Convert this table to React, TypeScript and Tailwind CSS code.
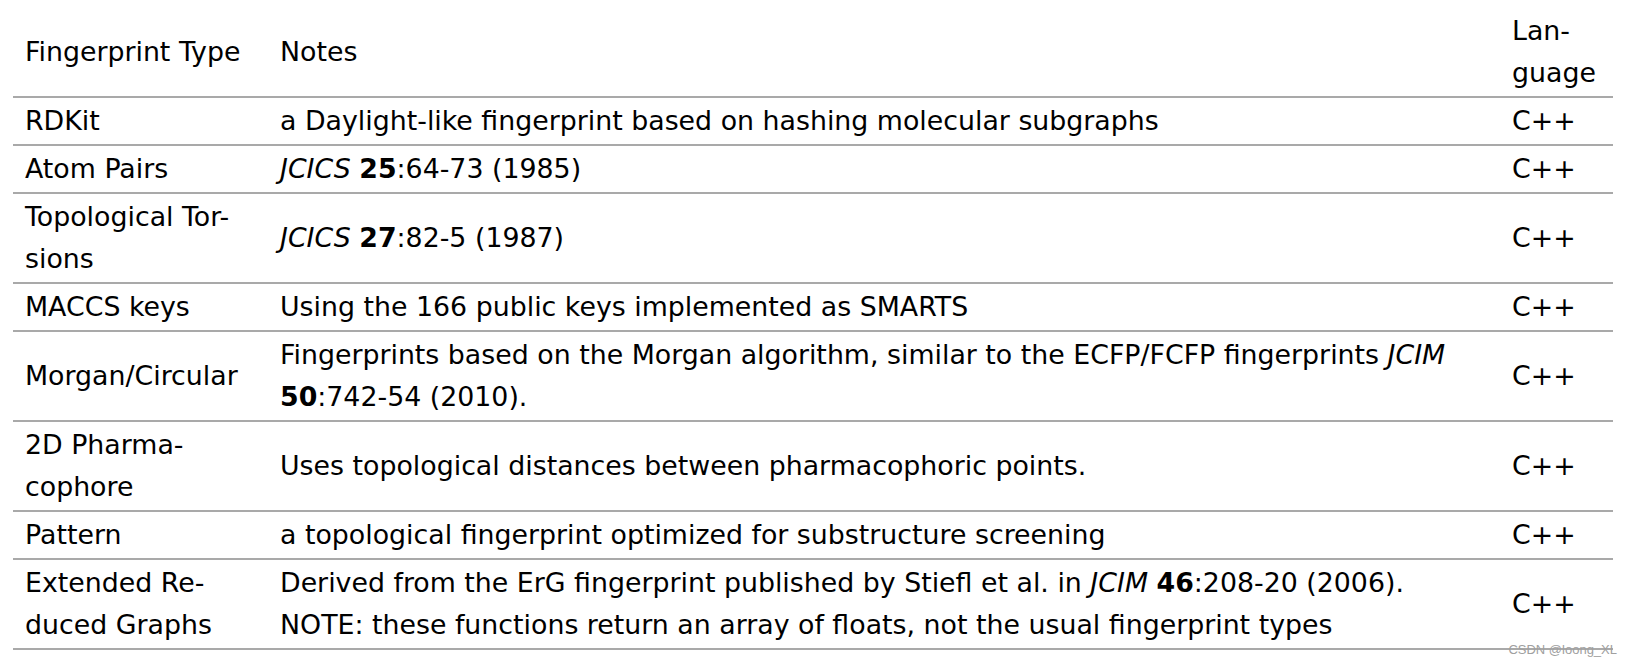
import React from 'react';

type Row = { type: React.ReactNode; notes: React.ReactNode; lang: string };

const rows: Row[] = [
  { type: 'RDKit', notes: 'a Daylight-like fingerprint based on hashing molecular subgraphs', lang: 'C++' },
  {
    type: 'Atom Pairs',
    notes: (
      <>
        <i>JCICS</i> <b>25</b>:64-73 (1985)
      </>
    ),
    lang: 'C++',
  },
  {
    type: (
      <>
        Topological Tor-
        <br />
        sions
      </>
    ),
    notes: (
      <>
        <i>JCICS</i> <b>27</b>:82-5 (1987)
      </>
    ),
    lang: 'C++',
  },
  { type: 'MACCS keys', notes: 'Using the 166 public keys implemented as SMARTS', lang: 'C++' },
  {
    type: 'Morgan/Circular',
    notes: (
      <>
        Fingerprints based on the Morgan algorithm, similar to the ECFP/FCFP fingerprints <i>JCIM</i>
        <br />
        <b>50</b>:742-54 (2010).
      </>
    ),
    lang: 'C++',
  },
  {
    type: (
      <>
        2D Pharma-
        <br />
        cophore
      </>
    ),
    notes: 'Uses topological distances between pharmacophoric points.',
    lang: 'C++',
  },
  { type: 'Pattern', notes: 'a topological fingerprint optimized for substructure screening', lang: 'C++' },
  {
    type: (
      <>
        Extended Re-
        <br />
        duced Graphs
      </>
    ),
    notes: (
      <>
        Derived from the ErG fingerprint published by Stiefl et al. in <i>JCIM</i> <b>46</b>:208-20 (2006).
        <br />
        NOTE: these functions return an array of floats, not the usual fingerprint types
      </>
    ),
    lang: 'C++',
  },
];

export default function App() {
  return (
    <div className="relative h-[668px] w-[1634px] overflow-hidden bg-white text-black font-['DejaVu_Sans',sans-serif] text-[26.8px] leading-[42px]">
      <table className="ml-[13px] mt-[8px] w-[1600px] table-fixed border-collapse">
        <colgroup>
          <col className="w-[255px]" />
          <col className="w-[1232px]" />
          <col className="w-[113px]" />
        </colgroup>
        <thead>
          <tr className="border-b-2 border-[#a9a9a9]">
            <th className="px-3 py-[2px] text-left align-middle font-normal">Fingerprint Type</th>
            <th className="px-3 py-[2px] text-left align-middle font-normal">Notes</th>
            <th className="px-3 py-[2px] text-left align-middle font-normal">
              Lan-
              <br />
              guage
            </th>
          </tr>
        </thead>
        <tbody>
          {rows.map((r, i) => (
            <tr key={i} className="border-b-2 border-[#a9a9a9]">
              <td className="px-3 py-[2px] align-middle">{r.type}</td>
              <td className="px-3 py-[2px] align-middle">{r.notes}</td>
              <td className="px-3 py-[2px] align-middle">{r.lang}</td>
            </tr>
          ))}
        </tbody>
      </table>
      <span className="absolute right-[17px] top-[642px] font-['Liberation_Sans',sans-serif] text-[13px] leading-[16px] text-[#a0a0a0]">
        CSDN @loong_XL
      </span>
    </div>
  );
}
